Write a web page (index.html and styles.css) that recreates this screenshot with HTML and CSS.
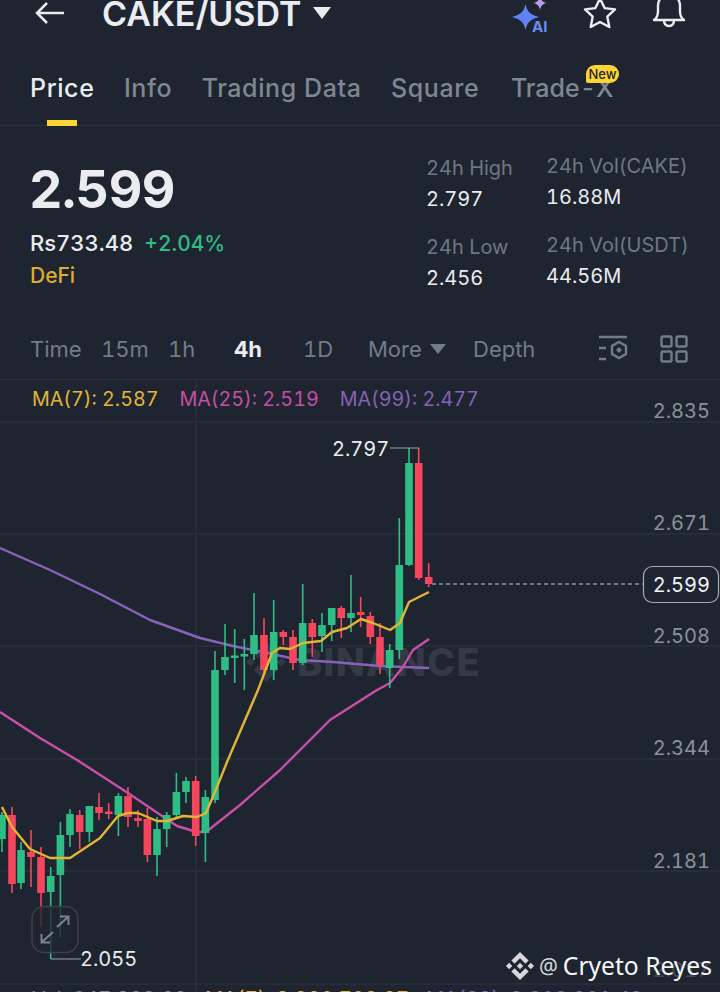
FILE: index.html
```html
<!DOCTYPE html>
<html lang="en">
<head>
    <meta charset="UTF-8">
    <meta name="viewport" content="width=device-width, initial-scale=1.0">
    <title>CAKE/USDT</title>
    <link rel="stylesheet" href="styles.css">
</head>
<body>
    <header class="topbar">
        <svg class="back-icon" width="32" height="26" viewBox="0 0 32 26"><path d="M30 13H3M13 3L3 13l10 10"/></svg>
        <h1 class="pair">CAKE/USDT</h1>
        <span class="pair-caret"></span>
        <div class="topbar-icons">
            <svg class="ai-icon" width="38" height="34" viewBox="0 0 38 34">
                <path class="ai-big" d="M13.500 8c1.500 7.500 4.500 10.500 13.500 13-9 2.500-12 5.500-13.500 13-1.500-7.500-4.500-10.500-13.500-13 9-2.500 12-5.500 13.500-13z"/>
                <path class="ai-small" d="M28 0c.6 3.500 2 5.500 6 7-4 1.500-5.400 3.500-6 7-.6-3.500-2-5.500-6-7 4-1.500 5.400-3.500 6-7z"/>
                <text class="ai-text" x="20" y="36">AI</text>
            </svg>
            <svg class="line-icon star-icon" width="34" height="32" viewBox="0 0 34 32"><path d="M17 1.500l4.600 9.600 10.400 1.300-7.700 7.200 2 10.400L17 25l-9.300 5 2-10.400L2 12.400l10.400-1.300z"/></svg>
            <svg class="line-icon" width="34" height="36" viewBox="0 0 34 36"><path d="M2 25c3-2 4-4 4-9V11C6 4 11 -1 17 -1s11 5 11 12v5c0 5 1 7 4 9zM12 25c0 4 2 6 5 6s5-2 5-6"/></svg>
        </div>
    </header>

    <nav class="tabs">
        <a class="tab tab-active">Price</a>
        <a class="tab">Info</a>
        <a class="tab">Trading Data</a>
        <a class="tab">Square</a>
        <a class="tab tab-new">Trade-X<span class="new-badge">New</span></a>
    </nav>

    <section class="stats">
        <div class="stats-main">
            <div class="last-price">2.599</div>
            <div class="fiat-row">
                <span class="fiat">Rs733.48</span>
                <span class="change">+2.04%</span>
            </div>
            <div class="tag">DeFi</div>
        </div>
        <div class="stats-col stats-col-first">
            <div class="stat">
                <span class="stat-label">24h High</span>
                <span class="stat-value">2.797</span>
            </div>
            <div class="stat">
                <span class="stat-label">24h Low</span>
                <span class="stat-value">2.456</span>
            </div>
        </div>
        <div class="stats-col">
            <div class="stat">
                <span class="stat-label">24h Vol(CAKE)</span>
                <span class="stat-value">16.88M</span>
            </div>
            <div class="stat">
                <span class="stat-label">24h Vol(USDT)</span>
                <span class="stat-value">44.56M</span>
            </div>
        </div>
    </section>

    <div class="intervals">
        <span>Time</span>
        <span>15m</span>
        <span>1h</span>
        <span class="interval-active">4h</span>
        <span>1D</span>
        <span class="interval-more">More<i class="more-caret"></i></span>
        <span>Depth</span>
        <svg class="tool-icon" width="30" height="28" viewBox="0 0 30 28"><path d="M1 2h28M1 13h7M1 24h7"/><path d="M21 7l7 4v8l-7 4-7-4v-8z"/><path class="tool-dot" d="M21 12l3 3-3 3-3-3z"/></svg>
        <svg class="tool-icon" width="28" height="28" viewBox="0 0 28 28"><rect x="1.500" y="1.500" width="10" height="10" rx="1.500"/><rect x="16.500" y="1.500" width="10" height="10" rx="1.500"/><rect x="1.500" y="16.500" width="10" height="10" rx="1.500"/><rect x="16.500" y="16.500" width="10" height="10" rx="1.500"/></svg>
    </div>

    <main class="chart">
        <div class="ma-legend">
            <span class="ma7">MA(7): 2.587</span>
            <span class="ma25">MA(25): 2.519</span>
            <span class="ma99">MA(99): 2.477</span>
        </div>

        <!-- viewBox keeps page coordinates so the candles read like the price axis -->
        <svg class="chart-svg" width="720" height="612" viewBox="0 380 720 612">
            <path class="grid" d="M0 422H720M0 534H720M0 646H720M0 759H720M0 871H720M0 984H720M196 380V992"/>

            <g class="wm">
                <svg x="246" y="642" width="40" height="40" viewBox="0 0 126.610 126.610"><path d="M38.730 53.200l24.590-24.580 24.600 24.600 14.300-14.310L63.320 0 24.420 38.900zM0 63.310l14.300-14.310 14.310 14.310-14.310 14.300zM38.730 73.410L63.320 98l24.600-24.600 14.310 14.290-38.910 38.920L24.420 87.700zM98 63.310l14.300-14.310 14.310 14.300-14.310 14.320zM77.830 63.300L63.320 48.780 52.590 59.510l-1.240 1.230-2.540 2.540 14.510 14.500 14.510-14.470z"/></svg>
                <text class="wm-text" x="297" y="676">BINANCE</text>
            </g>

            <path class="ma-line line-99" d="M0 548L50 570 100 594 150 620 200 638 233 646 267 653 300 660 333 662 380 666 429 668"/>
            <path class="ma-line line-25" d="M0 712L40 738 77 760 128 793 177 826 197 832 206 832 240 805 280 770 330 720 377 690 390 683 403 667 413 650 429 639"/>

            <path class="wick up" d="M2 812V852M21 842V889M50.700 867V959M60.400 822V937M70 809V847M89.400 806V842M118.400 793V836M157 817V876M166.700 812V847M176.400 773V818M186 777V803M205.400 790V862M215 651V803M225 624V675M234.700 629V683M244.300 639V690M254 593V660M273.700 600V680M302.700 584V665M322 613V652M331.700 608V641M351 575V632M389.700 644V688M399.300 518V659M409 448V566"/>
            <path class="body up" d="M2 815V839M21 850V883M50.700 876V892M60.400 835V875M70 814V835M89.400 806V832M118.400 796V815M157 829V855M166.700 815V829M176.400 792V815M186 781V792M205.400 797V833M215 670V800M225 657V670M234.700 655.500V658M244.300 654V656.500M254 635V654M273.700 632V670M302.700 623V663M322 625V636M331.700 608V625M351 613V618M389.700 650V668M399.300 565V650M409 463V565"/>
            <path class="wick down" d="M12 807V893M31 830V887M41 847V927M79.700 810V849M99 793V820M108.700 803V819M128 787V827M138 810V827M147.400 808V862M195.700 776V846M264 618V675M283.300 630V645M293 630V670M312.300 619V657M341.300 606V638M360.700 597V627M370.300 612V644M380 623V674M418.700 448V580M428.700 563V587"/>
            <path class="body down" d="M12 815V884M31 852V857M41 857V893M79.700 815V832M99 807V813M108.700 811.500V814M128 796V817M138 818V821M147.400 819V855M195.700 781V836M264 635V670M283.300 632V637M293 637V663M312.300 623V637M341.300 608V618M360.700 612V615M370.300 616V637M380 637V665M418.700 463V578M428.700 577V584"/>

            <path class="ma-line line-7" d="M2 807L12 827 30 849 50 858 70 858 100 838 118 816 128 813 138 813 157 821 167 821 183 816 197 817 206 813 217 787 227 762 258 690 272 653 280 648 290 649 303 643 321 641 332 632 347 628 361 619 373 623 390 630 400 623 409 602 429 592"/>

            <path class="hi-lo" d="M390 448H419M51 959H81"/>
            <text class="hi-lo-text" x="332" y="456">2.797</text>
            <text class="hi-lo-text" x="80" y="966">2.055</text>

            <path class="last-line" d="M432 584H643"/>
            <rect class="last-box" x="643.500" y="566.500" width="75" height="36" rx="9"/>
            <text class="last-text" x="710" y="592">2.599</text>

            <text class="axis" x="710" y="418">2.835</text>
            <text class="axis" x="710" y="530">2.671</text>
            <text class="axis" x="710" y="643">2.508</text>
            <text class="axis" x="710" y="755">2.344</text>
            <text class="axis" x="710" y="868">2.181</text>
            <text class="axis axis-faint" x="710" y="977">2.017</text>

            <rect class="expand-box" x="32" y="906.500" width="46" height="46" rx="12"/>
            <path class="expand-arrow" d="M57 927L68 917M60 916.500H68.500V925M53 932L42 942M50 942.500H41.500V934"/>

            <text class="vol vol-base" x="32" y="1006">Vol: 647,383.62</text>
            <text class="vol vol-ma7" x="205" y="1006">MA(7): 3,380,703.87</text>
            <text class="vol vol-ma99" x="426" y="1006">MA(99): 3,818,201.43</text>
        </svg>

        <div class="credit">
            <svg width="28" height="28" viewBox="0 0 126.610 126.610"><path d="M38.730 53.200l24.590-24.580 24.600 24.600 14.300-14.310L63.320 0 24.420 38.900zM0 63.310l14.300-14.310 14.310 14.310-14.310 14.300zM38.730 73.410L63.320 98l24.600-24.600 14.310 14.290-38.910 38.920L24.420 87.700zM98 63.310l14.300-14.310 14.310 14.300-14.310 14.320zM77.830 63.300L63.320 48.780 52.590 59.510l-1.240 1.230-2.540 2.540 14.510 14.500 14.510-14.470z"/></svg>
            <span class="credit-at">@</span>
            <span class="credit-name">Cryeto Reyes</span>
        </div>
    </main>
</body>
</html>
```

FILE: styles.css
```css
html, body {
    margin: 0;
    height: 992px;
    overflow: hidden;
}
body {
    width: 720px;
    background-color: #1f2530;
    color: #eaecef;
    font-family: Inter, "Liberation Sans", sans-serif;
    font-variant-numeric: tabular-nums;
}

/* top bar, its top edge is cut by the screenshot */
.topbar {
    display: flex;
    align-items: center;
    height: 26px;
    padding-left: 34px;
}
.back-icon path {
    fill: none;
    stroke: #eaecef;
    stroke-width: 2.500;
}
.pair {
    margin: 0 0 0 36px;
    font-size: 34px;
    font-weight: 600;
}
.pair-caret {
    margin-left: 12px;
    border-left: 9px solid transparent;
    border-right: 9px solid transparent;
    border-top: 12px solid #eaecef;
}
.topbar-icons {
    display: flex;
    align-items: center;
    gap: 33px;
    margin-left: auto;
    padding-right: 34px;
}
.topbar-icons svg {
    overflow: visible;
    flex: none;
}
.star-icon {
    margin-right: 2px;
}
.ai-big { fill: #5f83f6; }
.ai-small { fill: #b79be8; }
.ai-text {
    fill: #6c8cf5;
    font-size: 15px;
    font-weight: 700;
}
.line-icon path {
    fill: none;
    stroke: #eaecef;
    stroke-width: 2.400;
    stroke-linejoin: round;
}

/* tabs */
.tabs {
    display: flex;
    gap: 29.500px;
    height: 100px;
    box-sizing: border-box;
    padding: 44px 0 0 30px;
    border-bottom: 1px solid #2b313c;
}
.tab {
    position: relative;
    height: 36px;
    line-height: 36px;
    font-size: 25px;
    font-weight: 500;
    letter-spacing: 0.6px;
    color: #7f8793;
}
.tab-new {
    margin-left: 2px;
    letter-spacing: 0;
}
.tab-active {
    color: #eaecef;
}
.tab-active::after {
    content: "";
    position: absolute;
    left: 17px;
    top: 50px;
    width: 30px;
    height: 6px;
    background-color: #fcd535;
}
.new-badge {
    position: absolute;
    left: 75px;
    top: -5px;
    width: 33px;
    height: 18px;
    border-radius: 9px 9px 9px 2px;
    background-color: #fcd535;
    color: #1e2329;
    font-size: 13px;
    letter-spacing: 0;
    line-height: 18px;
    text-align: center;
}

/* price block */
.stats {
    display: flex;
    height: 197px;
    padding: 24px 0 0 30px;
    box-sizing: border-box;
}
.stats-main {
    width: 397px;
}
.last-price {
    font-size: 52px;
    font-weight: 700;
    line-height: 80px;
    letter-spacing: -0.5px;
    margin-left: -1px;
}
.fiat-row {
    display: flex;
    align-items: baseline;
    gap: 11px;
    margin-top: -2px;
    font-size: 21px;
    line-height: 30px;
    font-weight: 500;
}
.fiat {
    font-size: 22px;
}
.change {
    color: #2ebd85;
}
.tag {
    margin-top: 2px;
    font-size: 21px;
    line-height: 30px;
    font-weight: 500;
    color: #dcae2f;
}
.stats-col {
    width: 120px;
}
.stats-col-first {
    padding-top: 3px;
    margin-left: -1px;
    margin-right: 1px;
}
.stats-col:last-child {
    margin-left: -1px;
    margin-top: 1px;
}
.stat {
    display: flex;
    flex-direction: column;
    height: 79px;
    font-size: 20px;
    line-height: 31px;
    white-space: nowrap;
}
.stat-label {
    color: #6f7783;
}
.stat-value {
    font-weight: 400;
}

/* interval row */
.intervals {
    display: grid;
    grid-template-columns: 71px 67px 66px 69px 65px 105px 125px 62px 28px;
    align-items: center;
    height: 57px;
    padding: 0 0 4px 30px;
    border-bottom: 1px solid #2b313c;
    font-size: 22px;
    color: #737b87;
    box-sizing: border-box;
}
.interval-active {
    color: #eaecef;
    font-weight: 700;
}
.interval-more {
    display: flex;
    align-items: center;
}
.more-caret {
    margin-left: 8px;
    border-left: 8px solid transparent;
    border-right: 8px solid transparent;
    border-top: 10px solid #737b87;
}
.tool-icon * {
    fill: none;
    stroke: #737b87;
    stroke-width: 2.400;
}
.tool-icon .tool-dot {
    fill: #737b87;
    stroke: none;
}

/* chart */
.chart {
    position: relative;
}
.chart-svg {
    display: block;
}
.ma-legend {
    position: absolute;
    top: 7px;
    left: 32px;
    display: flex;
    gap: 21px;
    font-size: 19.700px;
    line-height: 24px;
}
.ma7 { color: #e3b535; }
.ma25 { color: #c44fa6; }
.ma99 { color: #8363b5; }

.grid {
    fill: none;
    stroke: #2a303b;
    stroke-width: 1.500;
}
.wm { fill: #333945; }
.wm-text {
    font-size: 38px;
    font-weight: 800;
    letter-spacing: 1.300px;
}
.ma-line {
    fill: none;
    stroke-width: 2.400;
    stroke-linejoin: round;
}
.line-7 { stroke: #e3b535; }
.line-25 { stroke: #c94fa8; }
.line-99 { stroke: #8a62bd; }
.wick { fill: none; stroke-width: 1.600; }
.body { fill: none; stroke-width: 7.600; }
.up { stroke: #2ebd85; }
.down { stroke: #f6465d; }
.hi-lo {
    fill: none;
    stroke: #9aa0a8;
    stroke-width: 1.200;
}
.hi-lo-text {
    fill: #eaecef;
    font-size: 20px;
}
.last-line {
    fill: none;
    stroke: #8d939c;
    stroke-width: 1.300;
    stroke-dasharray: 4 3;
}
.last-box {
    fill: #1f2530;
    stroke: #a6abb2;
    stroke-width: 1.200;
}
.last-text {
    fill: #f2f3f5;
    font-size: 20px;
    text-anchor: end;
}
.axis {
    fill: #8b919b;
    font-size: 20px;
    text-anchor: end;
}
.axis-faint {
    fill: #434a56;
}
.expand-box {
    fill: rgba(31, 37, 48, 0.78);
    stroke: #3b414c;
    stroke-width: 1.500;
}
.expand-arrow {
    fill: none;
    stroke: #7c828c;
    stroke-width: 2;
}
.vol { font-size: 20px; }
.vol-base { fill: #7f8793; }
.vol-ma7 { fill: #e3b535; }
.vol-ma99 { fill: #8363b5; }

.credit {
    position: absolute;
    right: 8px;
    bottom: 10px;
    display: flex;
    align-items: center;
    gap: 5px;
    color: #f4f5f7;
    font-family: "Noto Sans", sans-serif;
}
.credit svg { fill: #d6d8dc; }
.credit-at {
    font-size: 21px;
    color: #d6d8dc;
}
.credit-name {
    font-size: 24.600px;
    white-space: nowrap;
}
```
